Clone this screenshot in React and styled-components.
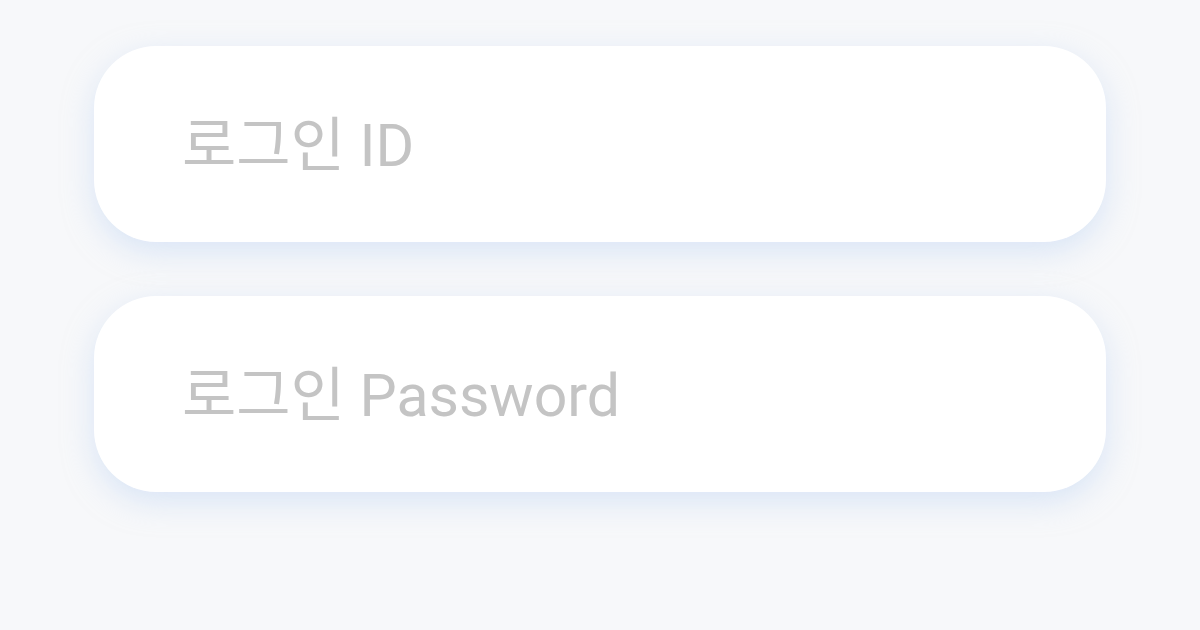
import React from 'react';
import styled, { createGlobalStyle } from 'styled-components';

const GlobalStyle = createGlobalStyle`
  html, body {
    margin: 0;
    padding: 0;
    background: #f7f8fa;
  }
  * { box-sizing: border-box; }
`;

const Page = styled.div`
  width: 1200px;
  height: 630px;
  padding: 46px 94px 0;
  display: flex;
  flex-direction: column;
  gap: 54px;
  background: #f7f8fa;
`;

const Field = styled.input`
  width: 100%;
  height: 196px;
  border: none;
  outline: none;
  border-radius: 62px;
  background: #ffffff;
  box-shadow: 0 10px 30px rgba(190, 212, 244, 0.5);
  padding: 2px 0 0 88px;
  font-family: "Roboto", "Noto Sans CJK KR", sans-serif;
  font-size: 59px;
  color: #333;

  &::placeholder {
    color: #c4c4c4;
  }
`;

export default function App() {
  return (
    <>
      <GlobalStyle />
      <Page>
        <Field type="text" placeholder="로그인 ID" />
        <Field type="password" placeholder="로그인 Password" />
      </Page>
    </>
  );
}
